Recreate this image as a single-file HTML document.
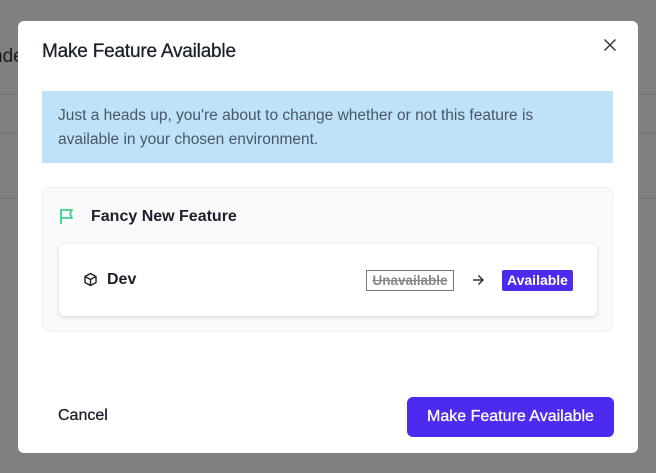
<!DOCTYPE html>
<html><head><style>
*{margin:0;padding:0;box-sizing:border-box}
body{width:656px;height:473px;background:#808080;font-family:"Liberation Sans",sans-serif;position:relative;overflow:hidden;color:#1a202c}
.line{position:absolute;left:0;width:656px;height:1px;background:#737373}
.modal{position:absolute;left:18px;top:21px;width:620px;height:432px;background:#fff;border-radius:6px}
.a{position:absolute}
</style></head><body>
<div class="a" style="left:-8px;top:46px;font-size:19px;color:#1a1a1a">nde</div>
<div class="line" style="top:94px"></div>
<div class="line" style="top:133px"></div>
<div class="line" style="top:198px"></div>
<div class="modal">
<div class="a" style="left:24px;top:20px;font-size:19px;color:#1a202c;letter-spacing:-0.2px;-webkit-text-stroke:0.3px #1a202c">Make Feature Available</div>
<svg class="a" style="left:585px;top:17px" width="14" height="14" viewBox="0 0 14 14"><path d="M1.5 1.5L12.5 12.5M12.5 1.5L1.5 12.5" stroke="#333" stroke-width="1.4"/></svg>
<div class="a" style="left:24px;top:70px;width:571px;height:72px;background:#bee3f8;padding:13px 16px;font-size:15.5px;line-height:24px;color:#4a5568">Just a heads up, you're about to change whether or not this feature is available in your chosen environment.</div>
<div class="a" style="left:24px;top:166px;width:571px;height:145px;background:#fafafa;border:1px solid #f0f0f0;border-radius:8px">
<svg class="a" style="left:16px;top:20px" width="17" height="17" viewBox="0 0 17 17"><path d="M2 16V2h11l-2 4 2 4H2" fill="none" stroke="#38d38a" stroke-width="1.8" stroke-linejoin="round"/></svg>
<div class="a" style="left:48px;top:20px;font-size:16px;font-weight:bold;color:#1a202c">Fancy New Feature</div>
<div class="a" style="left:16px;top:56px;width:538px;height:72px;background:#fff;border-radius:6px;box-shadow:0 1px 4px rgba(0,0,0,0.15)">
<svg class="a" style="left:24px;top:28px" width="15" height="15" viewBox="0 0 15 15"><path d="M7.5 1.5L13 4.5V10.5L7.5 13.5L2 10.5V4.5Z M2 4.5L7.5 7.5L13 4.5 M7.5 7.5V13.5" fill="none" stroke="#222" stroke-width="1.4" stroke-linejoin="round"/></svg>
<div class="a" style="left:48px;top:27px;font-size:16px;font-weight:bold;color:#1a202c">Dev</div>
<div class="a" style="left:307px;top:26px;width:88px;height:21px;border:1px solid #777;font-size:13.5px;font-weight:bold;color:#888;text-decoration:line-through;text-align:center;line-height:19px">Unavailable</div>
<svg class="a" style="left:413px;top:30px" width="12" height="12" viewBox="0 0 12 12"><path d="M1 6H11M6.5 1.5L11 6L6.5 10.5" fill="none" stroke="#333" stroke-width="1.5"/></svg>
<div class="a" style="left:443px;top:26px;width:71px;height:21px;background:#4c2bee;border-radius:2px;font-size:14px;font-weight:bold;color:#fff;text-align:center;line-height:21px">Available</div>
</div>
</div>
<div class="a" style="left:40px;top:386px;font-size:16px;color:#1a202c;-webkit-text-stroke:0.3px #1a202c">Cancel</div>
<div class="a" style="left:389px;top:376px;width:207px;height:40px;background:#4c2bee;border-radius:6px;color:#fff;font-size:16px;text-align:center;line-height:40px;-webkit-text-stroke:0.3px #fff">Make Feature Available</div>
</div>
</body></html>
